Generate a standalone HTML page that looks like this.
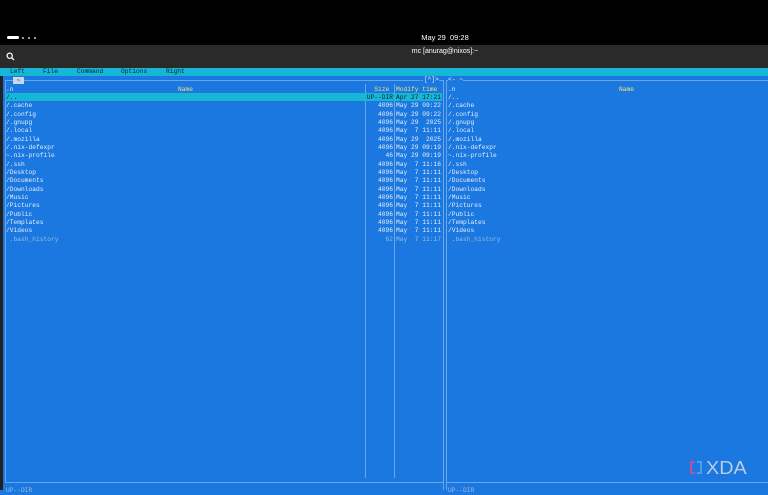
<!DOCTYPE html>
<html><head><style>
*{margin:0;padding:0;box-sizing:border-box}
body{width:768px;height:490px;overflow:hidden;background:#1a78e0;font-family:"Liberation Mono",monospace;font-size:6.25px;color:#e8eef8;position:relative}
.top{position:absolute;left:0;top:0;width:768px;height:45px;background:#000}
.gbar{position:absolute;left:0;top:45px;width:768px;height:23px;background:#2a2a2a}
.menu{position:absolute;left:0;top:68px;width:768px;height:8px;background:#16b6d6;color:#123}
.m{position:absolute;top:0;line-height:8px;white-space:pre}
.t{position:absolute;white-space:pre;line-height:8.35px}
.v{position:absolute;background:#6aa6ea;width:1px}
.h{position:absolute;background:#6aa6ea;height:1px}
.hdr{color:#f2e27a}
.dim{color:#9bbbe0}
</style></head><body>
<div class="top"></div>
<div style="position:absolute;left:7px;top:36px;width:12px;height:3px;border-radius:2px;background:#fff"></div>
<div style="position:absolute;left:22px;top:37px;width:2px;height:2px;border-radius:1px;background:#ccc"></div>
<div style="position:absolute;left:28px;top:37px;width:2px;height:2px;border-radius:1px;background:#ccc"></div>
<div style="position:absolute;left:34px;top:37px;width:2px;height:2px;border-radius:1px;background:#ccc"></div>
<div style="position:absolute;left:0;width:890px;top:33px;text-align:center;color:#fff;font-family:'Liberation Sans',sans-serif;font-size:7.5px">May 29&nbsp; 09:28</div>
<div class="gbar"></div>
<svg style="position:absolute;left:6px;top:52px" width="9" height="9" viewBox="0 0 9 9"><circle cx="3.7" cy="3.7" r="2.6" fill="none" stroke="#fff" stroke-width="1.2"/><path d="M5.6 5.6 8 8" stroke="#fff" stroke-width="1.3"/></svg>
<div style="position:absolute;left:0;width:890px;top:48px;text-align:center;color:#fff;font-family:'Liberation Sans',sans-serif;font-size:7px">mc [anurag@nixos]:~</div>
<div class="menu"><span class="m" style="left:10px">Left</span><span class="m" style="left:43px">File</span><span class="m" style="left:77px">Command</span><span class="m" style="left:121px">Options</span><span class="m" style="left:166px">Right</span></div>
<div style="position:absolute;left:0;top:76px;width:3px;height:414px;background:#222"></div>
<div class="v" style="left:5px;top:80px;height:403px"></div>
<div class="v" style="left:443px;top:80px;height:410px"></div>
<div class="v" style="left:446px;top:80px;height:410px"></div>
<div class="v" style="left:365px;top:84px;height:394px"></div>
<div class="v" style="left:394px;top:84px;height:394px"></div>
<div class="h" style="left:5px;top:80px;width:438px"></div>
<div class="h" style="left:446px;top:80px;width:322px"></div>
<div class="h" style="left:5px;top:482px;width:438px"></div>
<div class="h" style="left:446px;top:482px;width:322px"></div>
<div style="position:absolute;left:13px;top:77px;width:11px;height:7px;background:#c8d8ea;color:#123;text-align:center;line-height:7px">~</div>
<div class="t" style="left:420px;top:76px;background:#1a78e0">.[^]&gt;</div>
<div class="t" style="left:448px;top:76px;background:#1a78e0">&lt;- ~</div>
<div style="position:absolute;left:5px;top:93px;width:437px;height:8px;background:#16b6d6"></div>
<div class="t" style="left:6px;top:85.5px">.n<br><span style="color:#123">/..</span><br>/.cache<br>/.config<br>/.gnupg<br>/.local<br>/.mozilla<br>/.nix-defexpr<br>~.nix-profile<br>/.ssh<br>/Desktop<br>/Documents<br>/Downloads<br>/Music<br>/Pictures<br>/Public<br>/Templates<br>/Videos<br><span class="dim"> .bash_history</span></div>
<div class="t hdr" style="left:178px;top:85.5px">Name</div>
<div class="t" style="left:366px;top:85.5px;width:27px;text-align:right"><span class="hdr">Size </span><br><span style="color:#123">UP--DIR</span><br>4096<br>4096<br>4096<br>4096<br>4096<br>4096<br>46<br>4096<br>4096<br>4096<br>4096<br>4096<br>4096<br>4096<br>4096<br>4096<br><span class="dim">62</span></div>
<div class="t" style="left:396px;top:85.5px"><span class="hdr">Modify time</span><br><span style="color:#123">Apr 27 17:21</span><br>May 29 09:22<br>May 29 09:22<br>May 29  2025<br>May  7 11:11<br>May 29  2025<br>May 29 09:19<br>May 29 09:19<br>May  7 11:16<br>May  7 11:11<br>May  7 11:11<br>May  7 11:11<br>May  7 11:11<br>May  7 11:11<br>May  7 11:11<br>May  7 11:11<br>May  7 11:11<br><span class="dim">May  7 11:17</span></div>
<div class="t" style="left:448px;top:85.5px">.n<br>/..<br>/.cache<br>/.config<br>/.gnupg<br>/.local<br>/.mozilla<br>/.nix-defexpr<br>~.nix-profile<br>/.ssh<br>/Desktop<br>/Documents<br>/Downloads<br>/Music<br>/Pictures<br>/Public<br>/Templates<br>/Videos<br><span class="dim"> .bash_history</span></div>
<div class="t hdr" style="left:619px;top:85.5px">Name</div>
<div class="t dim" style="left:6px;top:487px">UP--DIR</div>
<div class="t dim" style="left:448px;top:487px">UP--DIR</div>
<div style="position:absolute;left:690px;top:461px;width:5px;height:13px;border:2px solid #c0509a;border-right:none"></div>
<div style="position:absolute;left:697px;top:461px;width:5px;height:13px;border:2px solid #4aa0e8;border-left:none"></div>
<div style="position:absolute;left:706px;top:458px;font-family:'Liberation Sans',sans-serif;font-size:18px;color:#b8cce6;line-height:20px;transform:scaleX(1.1);transform-origin:left">XDA</div>
</body></html>
